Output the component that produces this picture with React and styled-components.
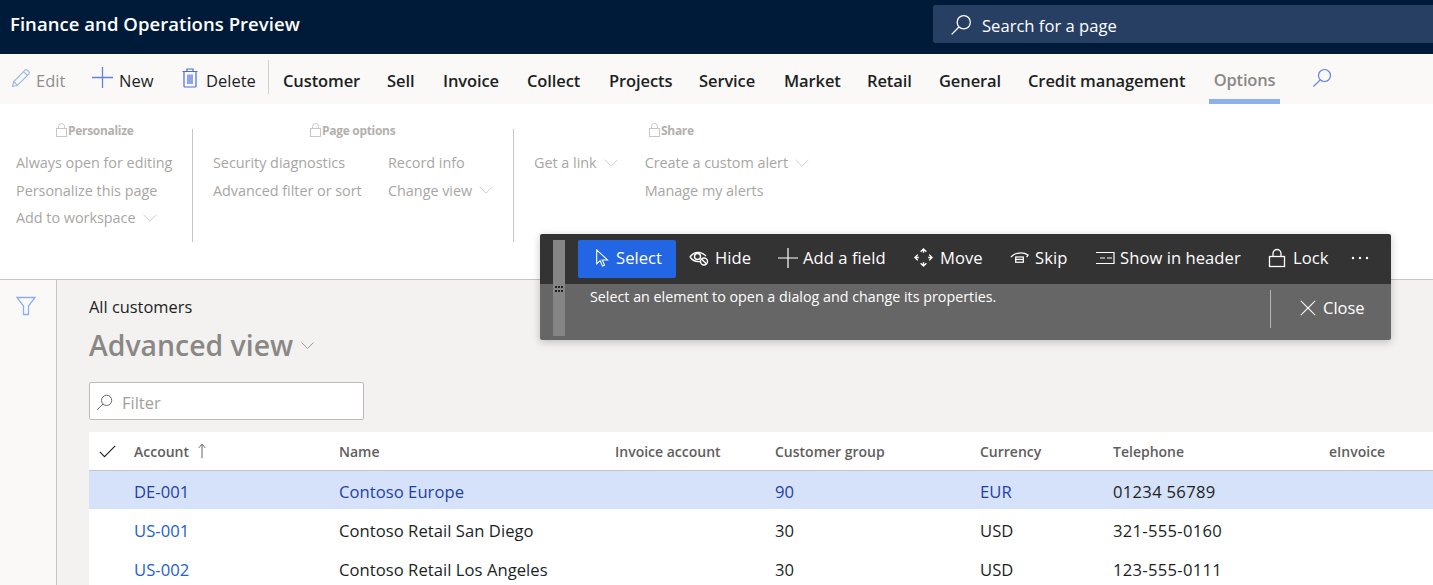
import React from "react";
import styled, { createGlobalStyle } from "styled-components";

const GlobalStyle = createGlobalStyle`
  html, body {
    margin: 0;
    padding: 0;
    overflow: hidden;
    background: #f3f2f1;
    font-family: "Open Sans", "Noto Sans", sans-serif;
  }
  * { box-sizing: border-box; }
`;

const Page = styled.div`
  position: relative;
  width: 1433px;
  height: 585px;
  overflow: hidden;
  display: flex;
  flex-direction: column;
`;

const Header = styled.header`
  flex: none;
  height: 54px;
  background: #001a39;
  display: flex;
  align-items: flex-start;
  justify-content: space-between;
`;

const AppTitle = styled.div`
  margin: 12px 0 0 10px;
  font-size: 18.5px;
  line-height: 24px;
  font-weight: 600;
  letter-spacing: 0.05px;
  color: #fff;
`;

const SearchBox = styled.div`
  margin-top: 5px;
  width: 500px;
  height: 38px;
  background: #283f64;
  border-radius: 2px 0 0 2px;
  display: flex;
  align-items: center;
  gap: 10px;
  padding: 2px 0 0 17px;
  font-size: 16.6px;
  color: #fff;
`;

const ActionBar = styled.nav`
  flex: none;
  height: 50px;
  background: #faf9f8;
  display: flex;
  align-items: stretch;
  font-size: 16.5px;
`;

const ActionButton = styled.div`
  width: ${(p) => p.$width}px;
  display: flex;
  align-items: center;
  gap: ${(p) => p.$gap}px;
  padding-top: 3px;
  padding-left: ${(p) => p.$pad || 0}px;
  color: ${(p) => (p.$disabled ? "#8f8e8d" : "#201f1e")};
  svg {
    margin-top: -6px;
  }
`;

const BarDivider = styled.div`
  width: 1px;
  margin: 6px 14px 10px 0;
  background: #d2d0ce;
`;

const NavItem = styled.div`
  margin-right: ${(p) => p.$after}px;
  width: ${(p) => p.$width}px;
  padding-top: 3px;
  display: flex;
  align-items: center;
  white-space: nowrap;
  font-weight: 600;
  letter-spacing: -0.1px;
  color: #201f1e;
`;

const OptionsTab = styled.div`
  width: 71px;
  margin: 0 32px 0 -4px;
  display: flex;
  align-items: center;
  justify-content: center;
  font-weight: 600;
  letter-spacing: -0.2px;
  color: #8a8886;
  border-bottom: 5px solid #8fafe8;
  padding-top: 5px;
`;

const SearchToggle = styled.div`
  display: flex;
  align-items: center;
  padding-bottom: 2px;
`;

const Ribbon = styled.section`
  flex: none;
  height: 176px;
  background: #fff;
  border-bottom: 1px solid #c8c6c4;
  display: flex;
  align-items: flex-start;
`;

const RibbonGroup = styled.div`
  width: ${(p) => p.$width}px;
  height: 113px;
  margin-top: 25px;
  display: flex;
  flex-direction: column;
  border-right: ${(p) => (p.$divider ? "1px solid #c8c6c4" : "0")};
  padding-left: ${(p) => p.$pad}px;
`;

const RibbonTitle = styled.div`
  height: 20px;
  margin-top: -9px;
  padding-left: ${(p) => p.$indent}px;
  display: flex;
  align-items: center;
  gap: 1px;
  font-size: 12px;
  font-weight: 700;
  letter-spacing: -0.3px;
  color: #b3b0ad;
`;

const RibbonColumns = styled.div`
  display: flex;
  margin-top: 9px;
`;

const RibbonColumn = styled.div`
  width: ${(p) => p.$width}px;
  display: flex;
  flex-direction: column;
`;

const RibbonItem = styled.div`
  height: 27.5px;
  display: flex;
  align-items: center;
  gap: 6px;
  white-space: nowrap;
  font-size: 14.4px;
  letter-spacing: -0.02px;
  color: #a8a6a4;
`;

const Body = styled.div`
  flex: 1;
  min-height: 0;
  display: flex;
  background: #f3f2f1;
`;

const FilterRail = styled.aside`
  width: 57px;
  background: #faf9f8;
  border-right: 1px solid #c8c6c4;
  display: flex;
  justify-content: center;
  padding: 16px 4px 0 0;
`;

const Main = styled.main`
  flex: 1;
  padding: 15px 0 0 32px;
`;

const Breadcrumb = styled.div`
  font-size: 16.4px;
  line-height: 24px;
  color: #201f1e;
`;

const ViewTitle = styled.div`
  margin-top: 7px;
  height: 38px;
  display: flex;
  align-items: center;
  gap: 7px;
  font-size: 28.4px;
  font-weight: 600;
  color: #8a8886;
`;

const FilterBox = styled.div`
  margin-top: 18px;
  width: 275px;
  height: 38px;
  background: #fff;
  border: 1px solid #bdbbb9;
  border-radius: 2px;
  display: flex;
  align-items: center;
  gap: 9px;
  padding: 2px 0 0 6px;
  font-size: 16.5px;
  color: #a19f9d;
`;

const Grid = styled.div`
  margin-top: 12px;
  background: #fff;
`;

const columns = "45px 205px 276px 160px 205px 133px 216px 1fr";

const HeaderRow = styled.div`
  height: 39px;
  display: grid;
  grid-template-columns: ${columns};
  align-items: center;
  border-bottom: 1px solid #c8c6c4;
  font-size: 14px;
  font-weight: 600;
  color: #605e5c;
`;

const HeaderCell = styled.div`
  display: flex;
  align-items: center;
  gap: 5px;
  white-space: nowrap;
`;

const CheckCell = styled.div`
  display: flex;
  padding-left: 10px;
`;

const Row = styled.div`
  height: ${(p) => (p.$selected ? 38 : 39)}px;
  padding-top: ${(p) => (p.$selected ? 2 : 4)}px;
  display: grid;
  grid-template-columns: ${columns};
  align-items: center;
  font-size: 16.6px;
  letter-spacing: 0.05px;
  background: ${(p) => (p.$selected ? "#d6e2f9" : "#fff")};
  color: ${(p) => (p.$selected ? "#1f3fa8" : "#201f1e")};
`;

const Cell = styled.div`
  white-space: nowrap;
  color: ${(p) => (p.$link ? "#2260d8" : "inherit")};
`;

const PhoneCell = styled.div`
  white-space: nowrap;
  letter-spacing: 0.3px;
  color: #201f1e;
`;

const Floating = styled.div`
  position: absolute;
  left: 540px;
  top: 234px;
  width: 851px;
  height: 106px;
  border-radius: 2px;
  overflow: hidden;
  box-shadow: 0 2px 8px rgba(0, 0, 0, 0.22);
  color: #fff;
`;

const Gripper = styled.div`
  position: absolute;
  left: 13px;
  top: 6px;
  width: 12px;
  height: 96px;
  background: #858585;
  display: flex;
  flex-direction: column;
  align-items: center;
  justify-content: flex-start;
  padding-top: 46px;
  gap: 2px;
`;

const GripDots = styled.div`
  width: 8px;
  height: 2px;
  background: repeating-linear-gradient(90deg, #222 0 2px, transparent 2px 3px);
`;

const FloatTop = styled.div`
  height: 50px;
  background: #333;
  display: flex;
  align-items: flex-start;
  padding: 6px 0 0 38px;
  font-size: 16.6px;
  letter-spacing: 0.05px;
`;

const FloatButton = styled.div`
  width: ${(p) => p.$width}px;
  height: 38px;
  padding-bottom: 3px;
  display: flex;
  align-items: center;
  gap: ${(p) => p.$gap}px;
  padding-left: ${(p) => p.$pad}px;
  border-radius: 2px;
  white-space: nowrap;
  background: ${(p) => (p.$active ? "#2266e3" : "transparent")};
`;

const FloatBottom = styled.div`
  height: 56px;
  background: #666;
  display: flex;
  justify-content: space-between;
  align-items: flex-start;
  padding: 0 26px 0 50px;
`;

const Hint = styled.div`
  margin-top: 3px;
  font-size: 14.3px;
  line-height: 20px;
`;

const CloseArea = styled.div`
  margin-top: 6px;
  height: 38px;
  width: 95px;
  padding: 0 0 3px 28px;
  border-left: 1px solid #b5b5b5;
  display: flex;
  align-items: center;
  gap: 6px;
  font-size: 16.5px;
`;

const Icon = ({ size = 20, stroke = "currentColor", width = 1.3, children }) => (
  <svg
    width={size}
    height={size}
    viewBox="0 0 20 20"
    fill="none"
    stroke={stroke}
    strokeWidth={width}
    style={{ flex: "none" }}
  >
    {children}
  </svg>
);

const Magnifier = (props) => (
  <Icon {...props}>
    <circle cx="12.5" cy="7.5" r="6" />
    <path d="M8.2 11.8 1.5 18.5" />
  </Icon>
);

const Chevron = ({ color = "#c8c6c4", size = 16 }) => (
  <Icon size={size} stroke={color} width={1.1}>
    <path d="M2 6l8 8 8-8" />
  </Icon>
);

const SmallLock = () => (
  <svg width="11" height="14" viewBox="0 0 11 14" fill="none" stroke="#c8c6c4" strokeWidth="1">
    <rect x="0.5" y="5.5" width="10" height="8" />
    <path d="M2.5 5.5V3.500a3 3 0 0 1 6 0v2" />
  </svg>
);

const rows = [
  { account: "DE-001", name: "Contoso Europe", group: "90", currency: "EUR", phone: "01234 56789", selected: true },
  { account: "US-001", name: "Contoso Retail San Diego", group: "30", currency: "USD", phone: "321-555-0160" },
  { account: "US-002", name: "Contoso Retail Los Angeles", group: "30", currency: "USD", phone: "123-555-0111" },
];

const navItems = [
  ["Customer", 77, 27],
  ["Sell", 29, 27],
  ["Invoice", 57, 27],
  ["Collect", 55, 27],
  ["Projects", 63, 27],
  ["Service", 58, 27],
  ["Market", 56, 27],
  ["Retail", 45, 27],
  ["General", 62, 27],
  ["Credit management", 158, 27],
];

export default function App() {
  return (
    <Page>
      <GlobalStyle />
      <Header>
        <AppTitle>Finance and Operations Preview</AppTitle>
        <SearchBox>
          <Magnifier size={22} stroke="#fff" width={1.2} />
          Search for a page
        </SearchBox>
      </Header>

      <ActionBar>
        <ActionButton $width={92} $pad={11} $gap={5} $disabled>
          <Icon size={20} stroke="#9db8ee" width={1.2}>
            <path d="M1.500 18.500l1.200-5L14 2.200a1.600 1.600 0 0 1 2.300 0l1.500 1.500a1.600 1.600 0 0 1 0 2.300L6.500 17.300zM2.700 13.500l3.800 3.800M12.600 3.600l3.800 3.800" />
          </Icon>
          Edit
        </ActionButton>
        <ActionButton $width={88} $gap={6}>
          <Icon size={21} stroke="#5f82e6" width={1.2}>
            <path d="M10 0v20M0 10h20" />
          </Icon>
          New
        </ActionButton>
        <ActionButton $width={88} $pad={-1} $gap={6}>
          <Icon size={20} stroke="#4a6cdc" width={1.2}>
            <path d="M2.500 3.500h15M7 3.500V1h6v2.500M4 3.500v14.700a.8.8 0 0 0 .8.8h10.400a.8.8 0 0 0 .8-.8V3.500M8 6.500v9.500M10 6.500v9.500M12 6.500v9.500" />
          </Icon>
          Delete
        </ActionButton>
        <BarDivider />
        {navItems.map(([label, width, after]) => (
          <NavItem key={label} $width={width} $after={after}>
            {label}
          </NavItem>
        ))}
        <OptionsTab>Options</OptionsTab>
        <SearchToggle>
          <Magnifier size={20} stroke="#5f82e6" width={1.2} />
        </SearchToggle>
      </ActionBar>

      <Ribbon>
        <RibbonGroup $width={193} $pad={16} $divider>
          <RibbonTitle $indent={40}>
            <SmallLock />
            Personalize
          </RibbonTitle>
          <RibbonColumns>
            <RibbonColumn $width={170}>
              <RibbonItem>Always open for editing</RibbonItem>
              <RibbonItem>Personalize this page</RibbonItem>
              <RibbonItem>
                Add to workspace <Chevron />
              </RibbonItem>
            </RibbonColumn>
          </RibbonColumns>
        </RibbonGroup>
        <RibbonGroup $width={321} $pad={20} $divider>
          <RibbonTitle $indent={97}>
            <SmallLock />
            Page options
          </RibbonTitle>
          <RibbonColumns>
            <RibbonColumn $width={175}>
              <RibbonItem>Security diagnostics</RibbonItem>
              <RibbonItem>Advanced filter or sort</RibbonItem>
            </RibbonColumn>
            <RibbonColumn $width={110}>
              <RibbonItem>Record info</RibbonItem>
              <RibbonItem>
                Change view <Chevron />
              </RibbonItem>
            </RibbonColumn>
          </RibbonColumns>
        </RibbonGroup>
        <RibbonGroup $width={320} $pad={20}>
          <RibbonTitle $indent={115}>
            <SmallLock />
            Share
          </RibbonTitle>
          <RibbonColumns>
            <RibbonColumn $width={111}>
              <RibbonItem>
                Get a link <Chevron />
              </RibbonItem>
            </RibbonColumn>
            <RibbonColumn $width={190}>
              <RibbonItem>
                Create a custom alert <Chevron />
              </RibbonItem>
              <RibbonItem>Manage my alerts</RibbonItem>
            </RibbonColumn>
          </RibbonColumns>
        </RibbonGroup>
      </Ribbon>

      <Body>
        <FilterRail>
          <Icon size={20} stroke="#8fafe8" width={1.3}>
            <path d="M1 1.500h18L12.500 10v8.500h-5V10z" />
          </Icon>
        </FilterRail>
        <Main>
          <Breadcrumb>All customers</Breadcrumb>
          <ViewTitle>
            Advanced view
            <Chevron color="#8a8886" size={15} />
          </ViewTitle>
          <FilterBox>
            <Magnifier size={17} stroke="#605e5c" width={1.1} />
            Filter
          </FilterBox>
          <Grid>
            <HeaderRow>
              <CheckCell>
                <Icon size={17} stroke="#201f1e" width={1.3}>
                  <path d="M1 10.500 6.500 16 19 3.500" />
                </Icon>
              </CheckCell>
              <HeaderCell>
                Account
                <Icon size={16} stroke="#605e5c" width={1.2}>
                  <path d="M10 19V2M6 6l4-4.500L14 6" />
                </Icon>
              </HeaderCell>
              <HeaderCell>Name</HeaderCell>
              <HeaderCell>Invoice account</HeaderCell>
              <HeaderCell>Customer group</HeaderCell>
              <HeaderCell>Currency</HeaderCell>
              <HeaderCell>Telephone</HeaderCell>
              <HeaderCell>eInvoice</HeaderCell>
            </HeaderRow>
            {rows.map((row) => (
              <Row key={row.account} $selected={row.selected}>
                <div />
                <Cell $link={!row.selected}>{row.account}</Cell>
                <Cell>{row.name}</Cell>
                <div />
                <Cell>{row.group}</Cell>
                <Cell>{row.currency}</Cell>
                <PhoneCell>{row.phone}</PhoneCell>
                <div />
              </Row>
            ))}
          </Grid>
        </Main>
      </Body>

      <Floating>
        <FloatTop>
          <FloatButton $width={98} $pad={16} $active $gap={4}>
            <Icon size={18} width={1.2}>
              <path d="M3 1v15.500l3.800-3.500 2.700 6 2.300-1-2.700-5.800H15z" />
            </Icon>
            Select
          </FloatButton>
          <FloatButton $width={90} $pad={13} $gap={6}>
            <Icon size={20} width={1.4}>
              <path d="M1 9c4-6 11-6 16-1M1 9c3 4 7 5 10 4.500" />
              <circle cx="8.500" cy="8.500" r="3" />
              <circle cx="15" cy="13.500" r="3.500" />
              <path d="M12.500 11l5 5" />
            </Icon>
            Hide
          </FloatButton>
          <FloatButton $width={136} $pad={12} $gap={5}>
            <Icon size={20} width={1.2}>
              <path d="M10 0v20M0 10h20" />
            </Icon>
            Add a field
          </FloatButton>
          <FloatButton $width={97} $pad={12} $gap={7}>
            <Icon size={19} width={1.4}>
              <path d="M7 4l3-3 3 3M10 1v4M7 16l3 3 3-3M10 19v-4M4 7l-3 3 3 3M1 10h4M16 7l3 3-3 3M19 10h-4" />
            </Icon>
            Move
          </FloatButton>
          <FloatButton $width={85} $pad={11} $gap={6}>
            <Icon size={19} width={1.3}>
              <path d="M1 9.500C5 4.500 14 4 19 7.500l-1.500 2" />
              <rect x="6" y="9.500" width="8" height="5.500" />
              <path d="M6 12h8" />
            </Icon>
            Skip
          </FloatButton>
          <FloatButton $width={172} $pad={11} $gap={5}>
            <Icon size={20} width={1.2}>
              <path d="M1 4.500h18v11H1M5 10h5M12 10h5" />
            </Icon>
            Show in header
          </FloatButton>
          <FloatButton $width={82} $pad={11} $gap={6}>
            <Icon size={20} width={1.3}>
              <rect x="2.500" y="8.500" width="15" height="10" />
              <path d="M6 8.500V5.500a4 4 0 0 1 8 0v3" />
            </Icon>
            Lock
          </FloatButton>
          <FloatButton $width={40} $pad={12} $gap={0}>
            <Icon size={20} width={0}>
              <circle cx="3" cy="10" r="1.200" fill="#fff" />
              <circle cx="10" cy="10" r="1.200" fill="#fff" />
              <circle cx="17" cy="10" r="1.200" fill="#fff" />
            </Icon>
          </FloatButton>
        </FloatTop>
        <FloatBottom>
          <Hint>Select an element to open a dialog and change its properties.</Hint>
          <CloseArea>
            <Icon size={18} width={1.2}>
              <path d="M2 2l16 16M18 2 2 18" />
            </Icon>
            Close
          </CloseArea>
        </FloatBottom>
        <Gripper>
          <GripDots />
          <GripDots />
        </Gripper>
      </Floating>
    </Page>
  );
}
